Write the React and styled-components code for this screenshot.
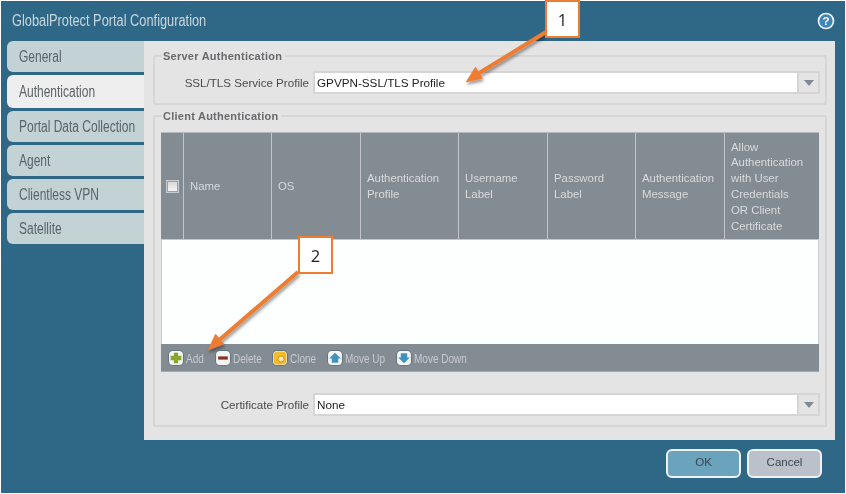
import React from 'react';
import styled, { createGlobalStyle } from 'styled-components';

const SANS = '"Liberation Sans", Arial, sans-serif';

const GlobalStyle = createGlobalStyle`
  html, body {
    margin: 0;
    padding: 0;
    background: #fff;
    font-family: ${SANS};
  }
  * { box-sizing: border-box; }
`;

const Page = styled.div`
  position: relative;
  width: 846px;
  height: 494px;
  padding: 1px;
  overflow: hidden;
  filter: blur(0.4px);
`;

const Dialog = styled.div`
  height: 492px;
  background: #2f6887;
  display: flex;
  flex-direction: column;
`;

const Header = styled.div`
  height: 40px;
  padding: 0 10px 0 11px;
  display: flex;
  align-items: center;
  justify-content: space-between;
`;

// the reference font is condensed and no narrow family is installed
const Narrow = styled.span`
  display: inline-block;
  width: ${(p) => (p.$width ? `${p.$width}px` : 'auto')};
  white-space: nowrap;
  transform: scaleX(${(p) => p.$scale});
  transform-origin: left center;
`;

const Title = styled.div`
  font-size: 16px;
  color: #c9d6dd;
`;

const Main = styled.div`
  display: flex;
  height: 399px;
  padding: 0 10px 0 6px;
`;

const Tabs = styled.div`
  flex: 0 0 137px;
  min-width: 0;
  display: flex;
  flex-direction: column;
  gap: 3px;
`;

const Tab = styled.div`
  height: ${(p) => (p.$active ? '33px' : '31px')};
  padding-left: 12px;
  display: flex;
  align-items: center;
  overflow: hidden;
  border-radius: 6px 0 0 6px;
  background: ${(p) => (p.$active ? '#eeeeee' : '#c3d2d4')};
  font-size: 16px;
  color: #5b6468;
`;

const Panel = styled.div`
  flex: 1;
  min-width: 0;
  padding: 8px 8px 0 9px;
  background: #e4e4e4;
`;

const Group = styled.fieldset`
  margin: ${(p) => (p.$spaced ? '4px 0 0' : '0')};
  padding: 0 6px;
  min-width: 0;
  height: ${(p) => p.$height}px;
  border: 2px solid #d6d6d6;
  border-radius: 2px;
`;

const Legend = styled.legend`
  margin-left: 1px;
  padding: 0 3px 0 1px;
  line-height: 14px;
  font-size: 11px;
  font-weight: bold;
  letter-spacing: 0.25px;
  color: #69696d;
`;

const FieldRow = styled.div`
  display: flex;
  align-items: center;
  gap: 4px;
  margin-right: -1px;
  padding-top: ${(p) => p.$top}px;
`;

const FieldLabel = styled.div`
  flex: 0 0 148px;
  text-align: right;
  font-size: 11.6px;
  color: #4b4b4f;
`;

const Select = styled.div`
  flex: 1;
  height: 23px;
  display: flex;
  border: 2px solid #d5d5d5;
  background: #fff;
`;

const SelectValue = styled.div`
  flex: 1;
  padding-left: 2px;
  line-height: 20px;
  font-size: 11.7px;
  color: #222;
`;

const SelectButton = styled.div`
  width: 21px;
  display: flex;
  align-items: center;
  justify-content: center;
  background: #e4e4e4;
  border-left: 2px solid #d5d5d5;
`;

const Caret = styled.div`
  width: 0;
  height: 0;
  border-left: 5.5px solid transparent;
  border-right: 5.5px solid transparent;
  border-top: 6px solid #7d8a96;
`;

const Grid = styled.div`
  margin-top: 9px;
  width: 658px;
`;

const HeaderRow = styled.div`
  display: grid;
  grid-template-columns: 23px 88px 89px 98px 89px 88px 89px 94px;
  height: 108px;
  background: #838b93;
  border-top: 1px solid #b5b9bd;
  border-bottom: 1px solid #c4c8cc;
`;

const HeaderCell = styled.div`
  display: flex;
  align-items: center;
  padding: 2px 0 0 6px;
  border-right: 1px solid #c2c6ca;
  font-size: 11.4px;
  line-height: 15.8px;
  color: #d8dbde;

  &:last-child {
    border-right: none;
  }
`;

const CheckCell = styled(HeaderCell)`
  padding: 0 0 0 6px;
`;

const Check = styled.div`
  width: 11px;
  height: 11px;
  background: linear-gradient(#d8d8d8, #f5f5f5);
  border: 1px solid #9aa0a6;
  box-shadow: 0 0 0 1px #c8ccd0;
`;

const GridBody = styled.div`
  height: 104px;
  background: #fdfefe;
  border-left: 1px solid #c8ccd4;
  border-right: 1px solid #c8ccd4;
`;

const Toolbar = styled.div`
  height: 28px;
  padding: 1px 0 0 7px;
  display: flex;
  align-items: center;
  gap: 12px;
  background: #838b93;
  border-bottom: 1px solid #a5a9ad;
`;

const ToolButton = styled.div`
  display: flex;
  align-items: center;
  gap: 2px;
  font-size: 13px;
  color: #c6cbcf;
`;

const ToolIcon = styled.svg`
  width: 16px;
  height: 16px;
  display: block;
`;

const Footer = styled.div`
  padding: 9px 23px 0 0;
  display: flex;
  justify-content: flex-end;
  gap: 6px;
`;

const Button = styled.div`
  width: 75px;
  height: 29px;
  padding-bottom: 3px;
  display: flex;
  align-items: center;
  justify-content: center;
  border: 2px solid #eef2f4;
  border-radius: 6px;
  background: ${(p) => (p.$primary ? '#6ba3bd' : '#bcc0c9')};
  font-size: 11.5px;
  color: #3c4650;
`;

const Callout = styled.div`
  position: absolute;
  left: ${(p) => p.$left}px;
  top: ${(p) => p.$top}px;
  width: 35px;
  height: 38px;
  display: flex;
  align-items: center;
  justify-content: center;
  background: #fff;
  border: 2px solid #ed7d31;
  font-family: "Open Sans", sans-serif;
  font-size: 16.5px;
  color: #222;
`;

const Arrows = styled.svg`
  position: absolute;
  left: 0;
  top: 0;
  width: 846px;
  height: 494px;
  overflow: visible;
`;

const tabs = ['General', 'Authentication', 'Portal Data Collection', 'Agent', 'Clientless VPN', 'Satellite'];

const columns = [
  'Name',
  'OS',
  ['Authentication', 'Profile'],
  ['Username', 'Label'],
  ['Password', 'Label'],
  ['Authentication', 'Message'],
  ['Allow', 'Authentication', 'with User', 'Credentials', 'OR Client', 'Certificate'],
];

const Frame = ({ children }) => (
  <ToolIcon viewBox="0 0 15 15">
    <rect x="0.5" y="0.5" width="14" height="14" rx="4" fill="#f3f5f5" stroke="#67757f" />
    {children}
  </ToolIcon>
);

const tools = [
  {
    label: 'Add',
    width: 17,
    icon: <path d="M5.5 2.5h4v3h3v4h-3v3h-4v-3h-3v-4h3z" fill="#8aa52d" />,
  },
  {
    label: 'Delete',
    width: 27,
    icon: <rect x="3" y="6" width="9" height="3" fill="#8c2f22" />,
  },
  {
    label: 'Clone',
    width: 25,
    icon: (
      <g>
        <rect x="1.5" y="1.5" width="12" height="12" rx="3.5" fill="#f2bd2c" />
        <circle cx="8.5" cy="8.5" r="2.8" fill="#fbe9b0" stroke="#d79a17" />
      </g>
    ),
  },
  {
    label: 'Move Up',
    width: 39,
    icon: <path d="M7.5 2.5 13 8H10.5v4h-6V8H2z" fill="#3f92bd" />,
  },
  {
    label: 'Move Down',
    width: 53,
    icon: <path d="M7.5 12.5 13 7H10.5V3h-6V7H2z" fill="#3f92bd" />,
  },
];

const App = () => (
  <Page>
    <GlobalStyle />
    <Dialog>
      <Header>
        <Title><Narrow $scale={0.8}>GlobalProtect Portal Configuration</Narrow></Title>
        <svg width="18" height="18" viewBox="0 0 18 18">
          <circle cx="9" cy="9" r="7.5" fill="#3d86b5" stroke="#eaf2f6" strokeWidth="1.7" />
          <text x="9" y="13" textAnchor="middle" fontSize="11.5" fontWeight="bold" fontFamily={SANS} fill="#fff">?</text>
        </svg>
      </Header>
      <Main>
        <Tabs>
          {tabs.map((tab) => (
            <Tab key={tab} $active={tab === 'Authentication'}>
              <Narrow $scale={0.75} $width={110}>{tab}</Narrow>
            </Tab>
          ))}
        </Tabs>
        <Panel>
          <Group $height={56}>
            <Legend>Server Authentication</Legend>
            <FieldRow $top={8}>
              <FieldLabel>SSL/TLS Service Profile</FieldLabel>
              <Select>
                <SelectValue>GPVPN-SSL/TLS Profile</SelectValue>
                <SelectButton><Caret /></SelectButton>
              </Select>
            </FieldRow>
          </Group>
          <Group $spaced $height={318}>
            <Legend>Client Authentication</Legend>
            <Grid>
              <HeaderRow>
                <CheckCell><Check /></CheckCell>
                {columns.map((col) => (
                  <HeaderCell key={[].concat(col).join(' ')}>
                    <div>
                      {[].concat(col).map((line) => <div key={line}>{line}</div>)}
                    </div>
                  </HeaderCell>
                ))}
              </HeaderRow>
              <GridBody />
              <Toolbar>
                {tools.map((tool) => (
                  <ToolButton key={tool.label}>
                    <Frame>{tool.icon}</Frame>
                    <Narrow $scale={0.77} $width={tool.width}>{tool.label}</Narrow>
                  </ToolButton>
                ))}
              </Toolbar>
            </Grid>
            <FieldRow $top={21}>
              <FieldLabel>Certificate Profile</FieldLabel>
              <Select>
                <SelectValue>None</SelectValue>
                <SelectButton><Caret /></SelectButton>
              </Select>
            </FieldRow>
          </Group>
        </Panel>
      </Main>
      <Footer>
        <Button $primary>OK</Button>
        <Button>Cancel</Button>
      </Footer>
    </Dialog>
    <Arrows viewBox="0 0 846 494">
      <defs>
        <filter id="arrow-shadow" x="-20%" y="-20%" width="140%" height="140%">
          <feDropShadow dx="1" dy="2.5" stdDeviation="1.6" floodColor="#000" floodOpacity="0.4" />
        </filter>
      </defs>
      <g fill="#ed7d31" stroke="#ed7d31" filter="url(#arrow-shadow)">
        <line x1="546" y1="32" x2="476" y2="75" strokeWidth="4" />
        <polygon points="466,82 482.5,78.5 475.5,67" strokeWidth="0.5" />
        <line x1="298" y1="272" x2="217" y2="342" strokeWidth="4" />
        <polygon points="208,350 224,344 215.5,334" strokeWidth="0.5" />
      </g>
    </Arrows>
    <Callout $left={545} $top={0}>1</Callout>
    <Callout $left={298} $top={236}>2</Callout>
  </Page>
);

export default App;
